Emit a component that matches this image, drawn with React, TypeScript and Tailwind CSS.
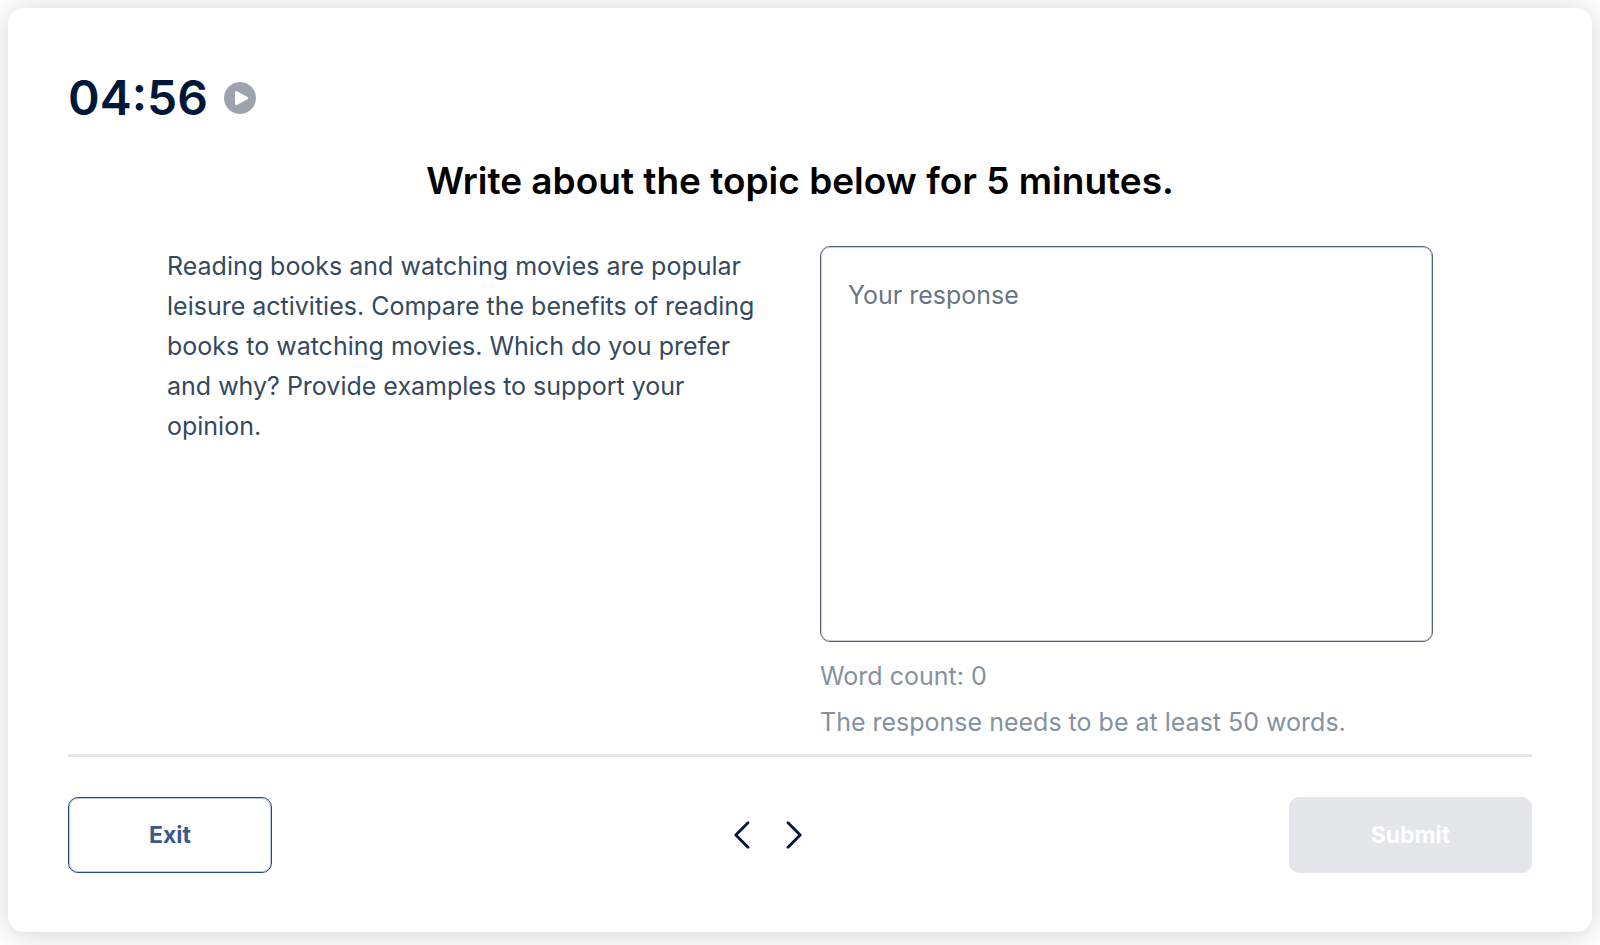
import * as React from "react";
import { clsx } from "clsx";

const MIN_WORDS = 50;

const TOPIC =
  "Reading books and watching movies are popular leisure activities. Compare the benefits of reading books to watching movies. Which do you prefer and why? Provide examples to support your opinion.";

function formatTime(seconds: number) {
  const mm = String(Math.floor(seconds / 60)).padStart(2, "0");
  const ss = String(seconds % 60).padStart(2, "0");
  return `${mm}:${ss}`;
}

function PlayIcon() {
  return (
    <svg viewBox="0 0 32 32" className="size-8" aria-hidden="true">
      <circle cx="16" cy="16" r="16" fill="#9ca3af" />
      <path
        d="M12.4 10.4v11.4L22.8 16.1z"
        fill="#fff"
        stroke="#fff"
        strokeWidth="2.6"
        strokeLinejoin="round"
      />
    </svg>
  );
}

function Chevron({ direction }: { direction: "left" | "right" }) {
  return (
    <svg
      viewBox="0 0 16 28"
      className={clsx("h-7 w-4", direction === "right" && "rotate-180")}
      fill="none"
      stroke="#001739"
      strokeWidth="2.8"
      strokeLinecap="round"
      strokeLinejoin="round"
      aria-hidden="true"
    >
      <path d="M14 1.8L1.8 14L14 26.2" />
    </svg>
  );
}

function Timer({ seconds }: { seconds: number }) {
  return (
    <div className="flex items-center gap-4">
      <span className="text-5xl font-semibold text-[#001739]">
        {formatTime(seconds)}
      </span>
      <button type="button" aria-label="Start timer">
        <PlayIcon />
      </button>
    </div>
  );
}

export default function App() {
  const [response, setResponse] = React.useState("");

  const wordCount = response.split(/\s+/).filter(Boolean).length;
  const canSubmit = wordCount >= MIN_WORDS;

  return (
    <div className="flex min-h-screen flex-col bg-white px-2 pt-2 pb-[13px] font-['Inter','Liberation_Sans',sans-serif]">
      <main className="flex grow flex-col rounded-2xl bg-white px-[60px] pt-[66px] pb-[59px] shadow-[0_2px_28px_rgba(0,0,0,0.18)]">
        <Timer seconds={296} />

        <h1 className="mt-[35px] text-center text-[37px] leading-[48px] font-semibold text-black">
          Write about the topic below for 5 minutes.
        </h1>

        <div className="mt-[41px] grid grow grid-cols-2 gap-10 px-[99px]">
          <p className="text-[25px] leading-10 text-[#34495e]">{TOPIC}</p>

          <div className="flex flex-col text-[25px] leading-10 text-[#8492a0]">
            <textarea
              aria-label="Your response"
              placeholder="Your response"
              value={response}
              onChange={(e) => setResponse(e.target.value)}
              className="min-h-48 w-full grow resize-none rounded-[10px] border border-[#566179] px-[27px] py-7 text-[#34495e] ring-1 ring-[#566179]/30 outline-none ring-inset placeholder:text-[#6b7487]"
            />
            <p className="mt-3.5">Word count: {wordCount}</p>
            <p className="mt-1.5 mb-3">
              The response needs to be at least {MIN_WORDS} words.
            </p>
          </div>
        </div>

        <hr className="border-t-[3px] border-[#e5e5ea]" />

        <div className="mt-10 flex items-center justify-between">
          <button
            type="button"
            className="h-19 w-51 rounded-[10px] border border-[#254a80] text-[23px] font-bold text-[#3a5a8a] ring-1 ring-[#254a80]/30 ring-inset"
          >
            Exit
          </button>

          <div className="mr-[25px] flex items-center gap-9">
            <button type="button" aria-label="Previous">
              <Chevron direction="left" />
            </button>
            <button type="button" aria-label="Next">
              <Chevron direction="right" />
            </button>
          </div>

          <button
            type="button"
            disabled={!canSubmit}
            className="h-19 w-[243px] rounded-[10px] bg-[#3a5a8a] text-[23px] font-bold text-white disabled:bg-[#e5e6ea]"
          >
            Submit
          </button>
        </div>
      </main>
    </div>
  );
}
